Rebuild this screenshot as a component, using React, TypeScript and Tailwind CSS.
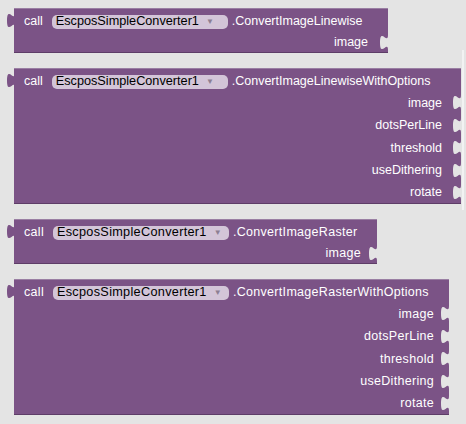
import React from "react";

// One method-call block in the App Inventor style.
type BlockSpec = {
  method: string;
  inputs: string[];
  width: number;
  labelPad: string;
  tracking: string;
};

const BLOCKS: BlockSpec[] = [
  { method: ".ConvertImageLinewise", inputs: ["image"], width: 374, labelPad: "pr-[20px]", tracking: "" },
  {
    method: ".ConvertImageLinewiseWithOptions",
    inputs: ["image", "dotsPerLine", "threshold", "useDithering", "rotate"],
    width: 447,
    labelPad: "pr-[19px]",
    tracking: "",
  },
  { method: ".ConvertImageRaster", inputs: ["image"], width: 363, labelPad: "pr-[16px]", tracking: "tracking-[0.3px]" },
  {
    method: ".ConvertImageRasterWithOptions",
    inputs: ["image", "dotsPerLine", "threshold", "useDithering", "rotate"],
    width: 435,
    labelPad: "pr-[15px]",
    tracking: "tracking-[0.3px]",
  },
];

// Jigsaw tab shape, x=8 is the block edge, bulge reaches x=0.
const TAB = "M8,5 C8,15 0,-3 0,12.5 S8,10 8,20 Z";

function Block({ spec }: { spec: BlockSpec }) {
  const last = spec.inputs.length - 1;
  // single-input blocks are a bit shorter at the bottom
  const lastHeight = last === 0 ? "h-[20px]" : "h-[21px]";
  return (
    <div className="relative" style={{ width: spec.width }}>
      {/* output plug sticking out on the left */}
      <svg width="8" height="20" viewBox="0 0 8 20" className="absolute -left-[7px] top-0">
        <path d={TAB} fill="#7b5386" />
      </svg>

      <div
        className={`flex flex-col border-t border-t-[#9a7fa3] border-b border-b-[#5e3d68] bg-[#7b5386] text-[12.5px] text-white ${spec.tracking}`}
      >
        {/* header: call + component dropdown + method name */}
        <div className="flex h-[23px] items-center pl-[10px] pt-[2px] whitespace-nowrap">
          <span>call</span>
          <span className="ml-[9px] flex h-[14px] w-[176px] items-center rounded-[5px] bg-[#d3c5d8] pl-[4px] text-[12.7px] text-black">
            <span className="leading-none">EscposSimpleConverter1</span>
            <span className="ml-[7px] text-[8px] leading-none text-[#8d7f92]">▼</span>
          </span>
          <span className="ml-[4px]">{spec.method}</span>
        </div>

        {spec.inputs.map((label, i) => (
          <div
            key={label}
            className={`relative flex items-center justify-end ${spec.labelPad} ${i === last ? lastHeight : "h-[22.5px]"}`}
          >
            <span>{label}</span>
            {/* socket cut into the right edge */}
            <svg width="8" height="20" viewBox="0 0 8 20" className="absolute right-0 top-[-2px]">
              <path d={TAB} fill="#e4e4e4" />
            </svg>
          </div>
        ))}
      </div>
    </div>
  );
}

export default function App() {
  return (
    <div
      className="relative flex h-[424px] w-[466px] flex-col gap-[15px] bg-[#e4e4e4] pl-[14px] pt-[8px]"
      style={{ fontFamily: '"Liberation Sans", Arial, sans-serif' }}
    >
      {BLOCKS.map((b) => (
        <Block key={b.method} spec={b} />
      ))}
      {/* thin scroll edge on the right */}
      <div className="absolute right-[2px] top-[50px] h-[160px] w-[2px] bg-[#f2f2f2]" />
    </div>
  );
}
